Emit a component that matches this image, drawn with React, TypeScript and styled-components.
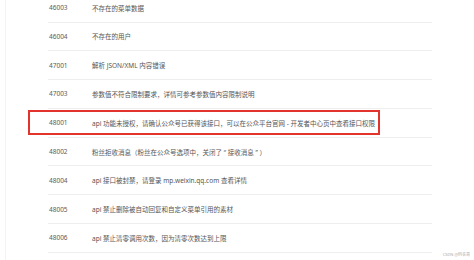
import React from 'react';
import styled, { createGlobalStyle } from 'styled-components';

const GlobalStyle = createGlobalStyle`
    html, body {
        margin: 0;
        padding: 0;
        background: #fff;
    }
    body {
        font-family: "Noto Sans", "Noto Sans CJK SC", sans-serif;
    }
`

const Frame = styled.div`
    position: relative;
    width: 468px;
    height: 260px;
    margin-left: 5px;
    border-left: 1px solid #f3f3f3;
    overflow: hidden;
`

const Table = styled.div`
    display: flex;
    flex-direction: column;
    width: 384px;
    margin-left: 42px;
    margin-top: -6.3px;
`

const Row = styled.div`
    position: relative;
    display: grid;
    grid-template-columns: 44px 1fr;
    align-items: center;
    height: 27.8px;
    border-bottom: 1px solid #eeeeee;
    font-size: 6.5px;
    white-space: nowrap;
`

const Code = styled.span`
    padding-left: 1px;
    color: #5a5a5a;
`

const Desc = styled.span`
    color: #555;
`

const Highlight = styled.div`
    position: absolute;
    left: -20px;
    right: 52px;
    top: 1.5px;
    bottom: 1.5px;
    border: 2px solid #e2332c;
    pointer-events: none;
`

const Watermark = styled.span`
    position: absolute;
    right: 4px;
    bottom: 3px;
    font-size: 4px;
    color: #aaa;
`

interface ErrorRow {
    code: string,
    msg: string,
    marked?: boolean,
}

const rows: ErrorRow[] = [
    { code: '46003', msg: '不存在的菜单数据' },
    { code: '46004', msg: '不存在的用户' },
    { code: '47001', msg: '解析 JSON/XML 内容错误' },
    { code: '47003', msg: '参数值不符合限制要求，详情可参考参数值内容限制说明' },
    { code: '48001', msg: 'api 功能未授权，请确认公众号已获得该接口，可以在公众平台官网 - 开发者中心页中查看接口权限', marked: true },
    { code: '48002', msg: '粉丝拒收消息（粉丝在公众号选项中，关闭了 “ 接收消息 ” ）' },
    { code: '48004', msg: 'api 接口被封禁，请登录 mp.weixin.qq.com 查看详情' },
    { code: '48005', msg: 'api 禁止删除被自动回复和自定义菜单引用的素材' },
    { code: '48006', msg: 'api 禁止清零调用次数，因为清零次数达到上限' },
]

function App() {
    return (
        <>
            <GlobalStyle />
            <Frame>
                <Table>
                    {rows.map(row => (
                        <Row key={row.code}>
                            <Code>{row.code}</Code>
                            <Desc>{row.msg}</Desc>
                            {row.marked && <Highlight />}
                        </Row>
                    ))}
                </Table>
                <Watermark>CSDN @码农哥</Watermark>
            </Frame>
        </>
    )
}

export default App;
